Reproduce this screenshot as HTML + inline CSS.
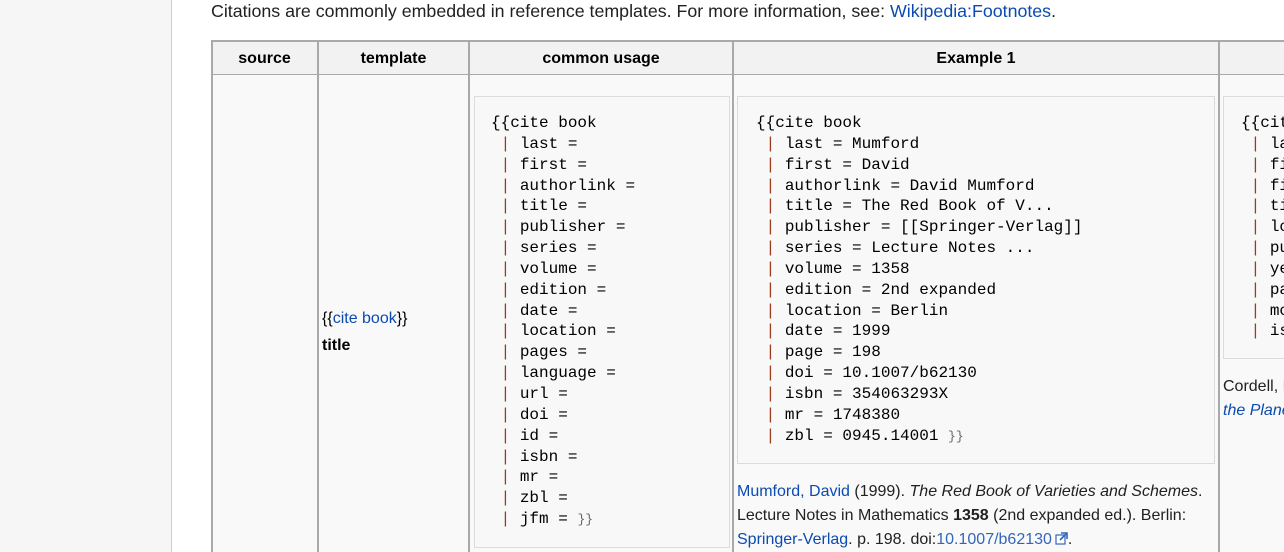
<!DOCTYPE html>
<html><head><meta charset="utf-8"><style>
body{margin:0;width:1284px;height:552px;overflow:hidden;background:#fff;font-family:"Liberation Sans",Arial,sans-serif;position:relative}
.a{position:absolute}
.side{left:0;top:0;width:171px;height:552px;background:#f6f6f6;border-right:1px solid #a7d7f9}
.intro{left:211px;top:0px;font-size:17.8px;line-height:22px;color:#202122;white-space:nowrap}
a{color:#0b4ab0;text-decoration:none}
.hd{top:41px;height:34px;background:#f2f2f2;font-weight:bold;font-size:16px;text-align:center;line-height:35px;color:#000}
.cell{top:75px;height:477px;background:#f9f9f9}
.vl{top:41px;width:2px;height:511px;background:#a9a9a9}
.hl{left:211px;width:1073px;height:2px;background:#a9a9a9}
.pre{background:#f8f8f8;border:1px solid #dcdcdc;font-family:"Liberation Mono","Courier New",monospace;font-size:16px;line-height:20.85px;white-space:pre;color:#000;padding-top:16px;box-sizing:border-box;overflow:hidden}
.p{color:#9b3d1c}
.c{color:#666;font-size:13px}
.cit{font-size:16px;line-height:24px;color:#202122}
</style></head><body>
<div class="a side"></div>
<div class="a intro">Citations are commonly embedded in reference templates. For more information, see: <a>Wikipedia:Footnotes</a>.</div>

<div class="a hd" style="left:211px;width:107px">source</div>
<div class="a hd" style="left:318px;width:151px">template</div>
<div class="a hd" style="left:469px;width:264px">common usage</div>
<div class="a hd" style="left:733px;width:486px">Example 1</div>
<div class="a hd" style="left:1219px;width:65px"></div>
<div class="a cell" style="left:211px;width:1073px"></div>
<div class="a hl" style="top:40px"></div>
<div class="a hl" style="top:74px;height:1px"></div>
<div class="a vl" style="left:211px"></div>
<div class="a vl" style="left:317px"></div>
<div class="a vl" style="left:468px"></div>
<div class="a vl" style="left:732px"></div>
<div class="a vl" style="left:1218px"></div>

<div class="a" style="left:322px;top:307px;font-size:16px;line-height:24px;color:#000">{{<a>cite book</a>}}<br><b style="line-height:30px">title</b></div>

<div class="a pre" style="left:474px;top:96px;width:256px;height:452px;padding-left:16px">{{cite book
 <span class="p">|</span> last =
 <span class="p">|</span> first =
 <span class="p">|</span> authorlink =
 <span class="p">|</span> title =
 <span class="p">|</span> publisher =
 <span class="p">|</span> series =
 <span class="p">|</span> volume =
 <span class="p">|</span> edition =
 <span class="p">|</span> date =
 <span class="p">|</span> location =
 <span class="p">|</span> pages =
 <span class="p">|</span> language =
 <span class="p">|</span> url =
 <span class="p">|</span> doi =
 <span class="p">|</span> id =
 <span class="p">|</span> isbn =
 <span class="p">|</span> mr =
 <span class="p">|</span> zbl =
 <span class="p">|</span> jfm = <span class="c">}}</span></div>

<div class="a pre" style="left:737px;top:96px;width:478px;height:368px;padding-left:18px">{{cite book
 <span class="p">|</span> last = Mumford
 <span class="p">|</span> first = David
 <span class="p">|</span> authorlink = David Mumford
 <span class="p">|</span> title = The Red Book of V...
 <span class="p">|</span> publisher = [[Springer-Verlag]]
 <span class="p">|</span> series = Lecture Notes ...
 <span class="p">|</span> volume = 1358
 <span class="p">|</span> edition = 2nd expanded
 <span class="p">|</span> location = Berlin
 <span class="p">|</span> date = 1999
 <span class="p">|</span> page = 198
 <span class="p">|</span> doi = 10.1007/b62130
 <span class="p">|</span> isbn = 354063293X
 <span class="p">|</span> mr = 1748380
 <span class="p">|</span> zbl = 0945.14001 <span class="c">}}</span></div>

<div class="a cit" style="left:737px;top:480px;width:480px"><a>Mumford, David</a> (1999). <i>The Red Book of Varieties and Schemes</i>.<br>Lecture Notes in Mathematics <b>1358</b> (2nd expanded ed.). Berlin:<br><a>Springer-Verlag</a>. p. 198. <a style="color:#202122">doi</a>:<a style="color:#3366bb">10.1007/b62130</a><svg width="13" height="13" viewBox="0 0 13 13" style="margin-left:3px;vertical-align:-1px"><rect x="1" y="3" width="9" height="9" fill="#fff" stroke="#36b" stroke-width="1.2"/><path d="M6 1h6v6M12 1L5 8" stroke="#36b" stroke-width="1.6" fill="none"/></svg>.</div>

<div class="a pre" style="left:1223px;top:96px;width:70px;height:263px;padding-left:17px">{{cite
 <span class="p">|</span> last
 <span class="p">|</span> firs
 <span class="p">|</span> firs
 <span class="p">|</span> titl
 <span class="p">|</span> loca
 <span class="p">|</span> publ
 <span class="p">|</span> year
 <span class="p">|</span> page
 <span class="p">|</span> mont
 <span class="p">|</span> isbn</div>
<div class="a cit" style="left:1223px;top:375px;white-space:nowrap">Cordell, Bruce<br><a><i>the Planet</i></a></div>
</body></html>
